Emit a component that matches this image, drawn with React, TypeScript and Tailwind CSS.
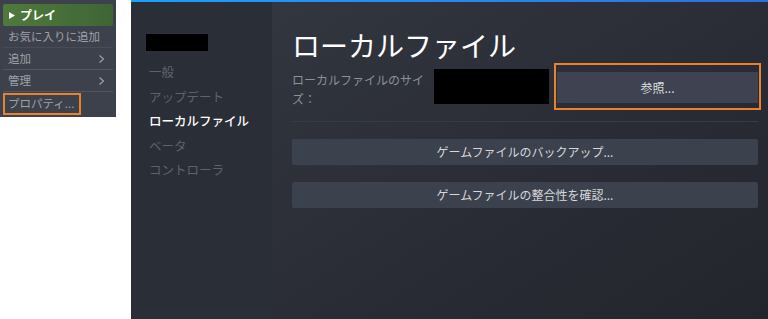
import React from "react";

const font = { fontFamily: '"Noto Sans CJK JP", "Noto Sans", sans-serif' };

function Chevron() {
  return (
    <svg width="7" height="10" viewBox="0 0 7 10" className="text-[#9aa0a8]">
      <path d="M1.5 1.5 L5.5 5 L1.5 8.5" fill="none" stroke="currentColor" strokeWidth="1.2" />
    </svg>
  );
}

export default function App() {
  return (
    <div className="w-[768px] h-[319px] bg-white flex overflow-hidden" style={font}>
      {/* context menu */}
      <div className="shrink-0 w-[116px] h-[117px] bg-[#3d414b] flex flex-col px-[3px] pt-[4px] text-[11.5px] leading-none">
        <div className="h-[22px] rounded-[2px] bg-gradient-to-r from-[#4f7a3e] to-[#3f6535] flex items-center px-[6px] text-white gap-[5px] text-[12px]">
          <svg width="6" height="7" viewBox="0 0 6 7"><path d="M0 0 L6 3.5 L0 7 Z" fill="white" /></svg>
          <span className="font-bold">プレイ</span>
        </div>
        <div className="h-[22px] flex items-center px-[5px] text-[#9ca1a9] border-b border-[#474c56] whitespace-nowrap">お気に入りに追加</div>
        <div className="h-[22px] flex items-center justify-between px-[5px] pr-[8px] text-[#9ca1a9] border-b border-[#50555f]">
          <span>追加</span>
          <Chevron />
        </div>
        <div className="h-[22px] flex items-center justify-between px-[5px] pr-[8px] text-[#9ca1a9] border-b border-[#50555f]">
          <span>管理</span>
          <Chevron />
        </div>
        <div className="mt-[1px] w-[78px] h-[22px] border-2 border-[#e8822e] flex items-center px-[3px] text-[11.5px] text-[#9ca1a9] whitespace-nowrap">プロパティ...</div>
      </div>

      <div className="shrink-0 w-[15px]" />

      {/* dialog */}
      <div className="flex-1 min-w-0 h-full flex flex-col">
        <div className="h-[2px] bg-gradient-to-r from-[#1a9fff] to-[#2f6fe0]" />
        <div className="flex-1 flex">
          {/* nav */}
          <div className="shrink-0 w-[141px] bg-[#2a2e36] flex flex-col pl-[15px] pt-[32px]">
            <div className="w-[62px] h-[17px] bg-black mb-[9px]" />
            <div className="flex flex-col pl-[3px] text-[12.5px] leading-[24.5px] text-[#5d636c]">
              <span>一般</span>
              <span>アップデート</span>
              <span className="text-white font-medium">ローカルファイル</span>
              <span>ベータ</span>
              <span>コントローラ</span>
            </div>
          </div>
          {/* content */}
          <div className="flex-1 bg-gradient-to-br from-[#32363f] via-[#2a2d35] to-[#22252c] flex flex-col pl-[20px] pr-[10px]">
            <div className="mt-[24px] text-[28px] leading-[38px] text-white">ローカルファイル</div>
            <div className="flex items-start mt-[-1px]">
              <div className="w-[142px] pt-[7px] text-[12px] leading-[19px] text-[#8b9199]">
                ローカルファイルのサイ<br />ズ：
              </div>
              <div className="w-[115px] h-[35px] bg-black mt-[6px]" />
              <div className="ml-[5px] w-[207px] h-[47px] border-2 border-[#e8822e] px-[1px] pt-[7px]">
                <div className="h-[31px] bg-[#3d4350] flex items-center justify-center text-[12px] text-[#dcdedf]">参照...</div>
              </div>
            </div>
            <div className="mt-[11px] h-px bg-[#373b45] w-[466px]" />
            <div className="mt-[17px] w-[466px] h-[26px] bg-[#3b414d] rounded-[2px] flex items-center justify-center text-[12px] text-[#d6d8db]">
              ゲームファイルのバックアップ...
            </div>
            <div className="mt-[17px] w-[466px] h-[26px] bg-[#3b414d] rounded-[2px] flex items-center justify-center text-[12px] text-[#d6d8db]">
              ゲームファイルの整合性を確認...
            </div>
          </div>
        </div>
      </div>
    </div>
  );
}
